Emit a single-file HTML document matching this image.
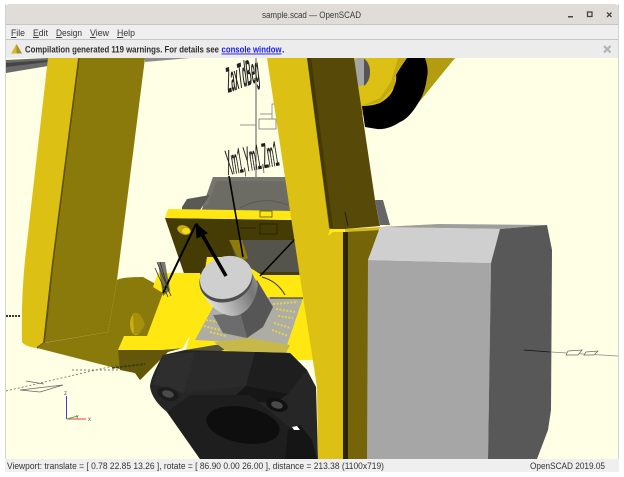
<!DOCTYPE html>
<html><head><meta charset="utf-8"><title>sample.scad — OpenSCAD</title>
<style>
html,body{margin:0;padding:0;width:624px;height:477px;overflow:hidden;background:#fff}
svg{display:block}
text{font-family:"Liberation Sans",sans-serif}
</style></head><body>
<svg width="624" height="477" viewBox="0 0 624 477" xmlns="http://www.w3.org/2000/svg">
<defs>
<linearGradient id="cyl" x1="0" y1="0.6" x2="1" y2="0.2"><stop offset="0" stop-color="#e8e8e8"/><stop offset=".4" stop-color="#b0b0b0"/><stop offset=".8" stop-color="#777"/><stop offset="1" stop-color="#8c8c8c"/></linearGradient>
<clipPath id="vp"><rect x="6" y="58" width="612" height="401"/></clipPath>
</defs>
<rect width="624" height="477" fill="#fff"/>
<!-- window -->
<path d="M5 472V9Q5 4 10 4H614Q619 4 619 9V472Z" fill="#efefef"/>
<path d="M5 24.500V9Q5 4 10 4H614Q619 4 619 9V24.500Z" fill="#e0dcd8"/>
<rect x="5" y="24" width="614" height="1" fill="#c8c5c0"/>
<rect x="5" y="39" width="614" height="1" fill="#c6c6c6"/>
<rect x="5" y="40" width="614" height="18" fill="#ececec"/>
<rect x="5" y="4" width="1" height="468" fill="#d4d4d4"/>
<rect x="618" y="4" width="1" height="468" fill="#d4d4d4"/>
<text x="262" y="18" font-size="9.500" fill="#3a3a3a" textLength="99" lengthAdjust="spacingAndGlyphs">sample.scad — OpenSCAD</text>
<rect x="568" y="16" width="5" height="1.500" fill="#444"/>
<rect x="587.500" y="12" width="4.500" height="4.500" fill="none" stroke="#444" stroke-width="1.300"/>
<path d="M607 12.500l4.500 4.500M611.500 12.500l-4.500 4.500" stroke="#444" stroke-width="1.300"/>
<g font-size="9.500" fill="#333">
<text x="11" y="36" textLength="14" lengthAdjust="spacingAndGlyphs"><tspan text-decoration="underline">F</tspan>ile</text>
<text x="33" y="36" textLength="15" lengthAdjust="spacingAndGlyphs"><tspan text-decoration="underline">E</tspan>dit</text>
<text x="56" y="36" textLength="26" lengthAdjust="spacingAndGlyphs"><tspan text-decoration="underline">D</tspan>esign</text>
<text x="90" y="36" textLength="19" lengthAdjust="spacingAndGlyphs"><tspan text-decoration="underline">V</tspan>iew</text>
<text x="117" y="36" textLength="18" lengthAdjust="spacingAndGlyphs"><tspan text-decoration="underline">H</tspan>elp</text>
</g>
<path d="M16.500 44L22 53.500H11Z" fill="#d6b92a"/><path d="M16.500 44L22 53.500H16.500Z" fill="#a8922a"/>
<text x="25" y="52.500" font-size="9.200" font-weight="bold" fill="#2e2e2e" textLength="194" lengthAdjust="spacingAndGlyphs">Compilation generated 119 warnings. For details see</text>
<text x="221.500" y="52.500" font-size="9.200" font-weight="bold" fill="#1a1aee" text-decoration="underline" textLength="60" lengthAdjust="spacingAndGlyphs">console window</text>
<text x="282" y="52.500" font-size="9.200" font-weight="bold" fill="#2e2e2e">.</text>
<path d="M604 46l6.500 6.500M610.500 46l-6.500 6.500" stroke="#aeb4b8" stroke-width="2.200"/>

<!-- viewport -->
<g clip-path="url(#vp)">
<rect x="6" y="58" width="612" height="401" fill="#ffffe5"/>
<path d="M6 60L48 58V66L6 73Z" fill="#6a6a6a"/>
<path d="M6 63L48 60V62L6 67Z" fill="#444"/>
<path d="M145 58H190L145 62Z" fill="#8c8c8c"/>

<!-- top-right object -->
<path d="M353 58H455L420 100L405 115H360Z" fill="#dcc114"/>
<path d="M425 58H455L420 101L400 122L421 97L427 77Z" fill="#b39c10"/>
<path d="M398 58H407L396 75L394 87L380 102L362 106L380 98L391 82Z" fill="#c3a912"/>
<path d="M407 58H425Q429 70 427 77Q425 92 420 100Q410 118 400 122Q388 130 377 129L365 127L362 106Q372 106 380 103Q392 96 394 87Q397 80 396 75Q400 68 407 58Z" fill="#000"/>
<ellipse cx="360" cy="72" rx="10" ry="14" fill="#a5a5a5"/>
<path d="M364 58.500Q370 63 370 72Q370 81 364 86Z" fill="#555"/>

<!-- background text and thin lines -->
<path d="M256 58V300" stroke="#5a5a5a" stroke-width="1" fill="none"/>
<rect x="259" y="119" width="17" height="10" fill="none" stroke="#666" stroke-width=".7"/>
<path d="M272 119V104H276M260 114H272M240 125H256" fill="none" stroke="#777" stroke-width=".7"/>

<!-- grey box behind plate -->
<path d="M213 177H290L295 215H200Z" fill="#6c6c64"/>
<path d="M213 177H290V181H217L207 205H203Z" fill="#76766e"/>
<path d="M182 207L187 199L210 195L200 210H182Z" fill="#5a5a55"/>
<path d="M240 208Q262 195 288 205" fill="none" stroke="#55554f" stroke-width=".8"/>

<text transform="matrix(.667 -.244 .417 3.6 228 93)" font-size="10" font-weight="bold" fill="#222">ZaxTdBeg</text>
<text transform="matrix(.78 -.15 .55 3.47 228 175)" font-size="10" fill="#1a1a1a" stroke="#1a1a1a" stroke-width=".15">Xm1,Ym1,Zm1</text>

<!-- upper plate -->
<path d="M165 218L293 220L305 320H200Z" fill="#453c05"/>
<path d="M230 240H300L303 272H240Z" fill="#54544d"/>
<path d="M229 240H242L248 258L240 262Z" fill="#8d7c0a"/>
<path d="M165 218L168 209L293 211V220Z" fill="#ffe811"/>
<ellipse cx="184" cy="230" rx="7" ry="4.500" fill="#c4a90f" transform="rotate(20 184 230)"/>
<ellipse cx="186" cy="231" rx="4" ry="3" fill="#f5dc20"/>
<rect x="260" y="211" width="12" height="6" fill="none" stroke="#5a5000" stroke-width=".8"/>
<rect x="260" y="224" width="17" height="10" fill="none" stroke="#221e00" stroke-width=".8"/>
<path d="M240 228H256" stroke="#221e00" stroke-width=".8"/>

<!-- left column -->
<path d="M48 58H145L117 280L108 332L43 343L24 300Z" fill="#8a7a0b"/>
<path d="M48 58H80L53 270L44 343L37 348Q26 347 22 342Q21 300 25 260Z" fill="#dcc114"/>
<path d="M79 58L52 270L44 343L37 348" fill="none" stroke="#5e5108" stroke-width="1.800"/>
<path d="M37 348L44 343L108 332L117 280Q122 277 143 277L163 288L167 353L140 380L135 373Z" fill="#8a7a0b"/>
<path d="M118 350H162L183 348L168 352L140 380L135 373L120 370Z" fill="#645808"/>
<ellipse cx="136" cy="324" rx="6" ry="11" fill="#c9ae10"/>
<path d="M133 313Q141 311 145 325L139 334L134 334Z" fill="#a5900e"/>

<!-- lower bright platform -->
<path d="M153 287L158 273H200L210 298L183 348L162 350H118L124 336H147L163 293Z" fill="#ffe811"/>
<path d="M207 257H232L262 275H303L313 343V360H183L200 300Z" fill="#ffe811"/>
<path d="M213 307L195 340L287 345L303 298L270 297Z" fill="#adada6"/>
<path d="M262 277Q277 281 285 295" fill="none" stroke="#3a3a20" stroke-width="1"/>
<path d="M270 298H303" stroke="#2c2a10" stroke-width="1"/>
<path d="M273 304L298 302M276 309L295 312M278 316L293 318M274 323L290 328M272 330L288 336M206 320L218 322M204 326L220 330M210 332L226 336" stroke="#e4d24a" stroke-width="2" stroke-dasharray="2 1.500" fill="none"/>
<path d="M185 350L215 345L240 343L205 358Z" fill="#57543a"/>
<path d="M214 342L250 338L290 345L285 355L260 357L225 350Z" fill="#c7b84c"/>

<!-- hatched tower left -->
<path d="M158 262L165 262L170 290L163 296Z" fill="#56564d" opacity=".8"/>

<!-- bolt -->
<path d="M213 315L225 300L257 280L240 313Z" fill="#b0b0b0"/>
<path d="M240 313L257 280L273 307L263 327L247 338Z" fill="#565656"/>
<path d="M213 315L240 313L247 338L223 333Z" fill="#6c6c6c"/>
<path d="M202 288C204 300 216 314 232 316C246 316 256 302 258 284L250 270L205 275Z" fill="url(#cyl)"/>
<ellipse cx="226" cy="280" rx="27" ry="22" transform="rotate(-18 226 280)" fill="#4e4e4e"/>
<ellipse cx="226" cy="277.500" rx="26.500" ry="21" transform="rotate(-18 226 277.500)" fill="#cfcfcf"/>

<!-- arrows -->
<path d="M196 224L163 293" stroke="#000" stroke-width="2"/>
<path d="M196 224L226 276" stroke="#000" stroke-width="3.500"/>
<path d="M196 224L207 233L197 238Z" fill="#000" stroke="#000"/>
<path d="M229 176L243 257" stroke="#000" stroke-width="1.600"/>
<path d="M296 238L260 276" stroke="#000" stroke-width="1.500"/>
<path d="M157 262L171 296M160 262L169 292M155 268L168 297" stroke="#333" stroke-width=".8"/>

<!-- fan -->
<path d="M150 387Q150 378 163 355L185 350L290 353L307 370L316 387L318 459H200L167 412Q152 400 150 387Z" fill="#262626"/>
<path d="M163 355L195 352L190 372L184 393L153 384Z" fill="#2e2e2e"/>
<path d="M195 352H255L246 386L184 393Z" fill="#2a2a2a"/>
<path d="M255 352L290 353L307 370L288 394L246 386Z" fill="#1e1e1e"/>
<path d="M246 386L288 394L275 403L230 400Z" fill="#161616"/>
<ellipse cx="168" cy="394" rx="11" ry="6.500" transform="rotate(15 168 394)" fill="#1c1c1c"/>
<ellipse cx="168" cy="394" rx="6" ry="3.500" transform="rotate(15 168 394)" fill="#4a4a4a"/>
<ellipse cx="277" cy="405" rx="11" ry="6.500" transform="rotate(15 277 405)" fill="#111"/>
<ellipse cx="277" cy="405" rx="6" ry="3.500" transform="rotate(15 277 405)" fill="#4a4a4a"/>
<path d="M167 412L190 395L250 395L305 440L317 459H200Z" fill="#1e1e1e"/>
<ellipse cx="243" cy="425" rx="37" ry="18" transform="rotate(10 243 425)" fill="#0e0e0e"/>
<path d="M288 430L300 425L312 440L317 459H285Z" fill="#151515"/>
<path d="M292 427l5-1 3 4h-6z" fill="#fff"/>

<!-- right column -->
<path d="M267 58H307L330 228L345 232V459H318L317 387L300 277Z" fill="#dcc114"/>
<path d="M307 58H354L375 200L380 226L345 229L330 231Z" fill="#574a08"/>
<path d="M307 58L311 58L333 228H329Z" fill="#2f2803" opacity=".45"/>
<path d="M375 200L383 200L390 225H380Z" fill="#666"/>
<path d="M328 236L330 229H345L344 232L333 232Z" fill="#ffe811"/>
<path d="M345 232L380 229L368 260V459H345Z" fill="#766408"/>
<path d="M343 232H348V459H343Z" fill="#2c2502"/>
<path d="M345 229L440 224V227L345 232Z" fill="#d4ba18"/>
<path d="M345 212L348 226" stroke="#222" stroke-width="1"/>

<!-- motor -->
<path d="M380 227L440 224L547 225L500 229Z" fill="#9e9e9e"/>
<path d="M380 227L500 229L491 263L368 260Z" fill="#cfcfcf"/>
<path d="M368 260L491 263L488 459H367Z" fill="#a6a6a6"/>
<path d="M500 229L547 225L552 250L551 410L548 430L537 459H488L491 263Z" fill="#585858"/>
<path d="M524 350L550 352" stroke="#111" stroke-width=".8"/>

<!-- right axis line -->
<path d="M551 352L618 356" stroke="#888" stroke-width=".8"/>
<path d="M568 351L582 350L578 355L566 355ZM586 352L598 351L594 355L584 355Z" fill="#ffffe5" stroke="#666" stroke-width=".7"/>

<!-- left axis marks -->
<path d="M6 316H20" stroke="#333" stroke-width="2" stroke-dasharray="2 1"/>
<path d="M6 391L160 355" fill="none" stroke="#555" stroke-width=".7" stroke-dasharray="2 2"/>
<path d="M20 390L63 385L40 392L30 391ZM26 381L44 384" fill="none" stroke="#666" stroke-width=".8"/>
<path d="M72 370L117 370L135 367" fill="none" stroke="#555" stroke-width=".7" stroke-dasharray="2 2"/>
<path d="M112 368L145 364" stroke="#3a3a10" stroke-width="1.500" stroke-dasharray="3 1"/>

<!-- axes gizmo -->
<path d="M66.500 419V396" stroke="#3a3af0" stroke-width="1"/>
<path d="M66.500 419H86" stroke="#f03a3a" stroke-width="1"/>
<path d="M66.500 419L78 416" stroke="#4cb84c" stroke-width="1"/>
<text x="64" y="395" font-size="6" fill="#555">z</text>
<text x="88" y="421" font-size="6" fill="#555">x</text>
<text x="76" y="418" font-size="5" fill="#555">y</text>
</g>

<!-- status bar -->
<rect x="5" y="459" width="614" height="13" fill="#efefef"/>
<text x="7" y="469" font-size="9.300" fill="#333" textLength="377" lengthAdjust="spacingAndGlyphs">Viewport: translate = [ 0.78 22.85 13.26 ], rotate = [ 86.90 0.00 26.00 ], distance = 213.38 (1100x719)</text>
<text x="530" y="469" font-size="9.300" fill="#333" textLength="75" lengthAdjust="spacingAndGlyphs">OpenSCAD 2019.05</text>
</svg>
</body></html>
